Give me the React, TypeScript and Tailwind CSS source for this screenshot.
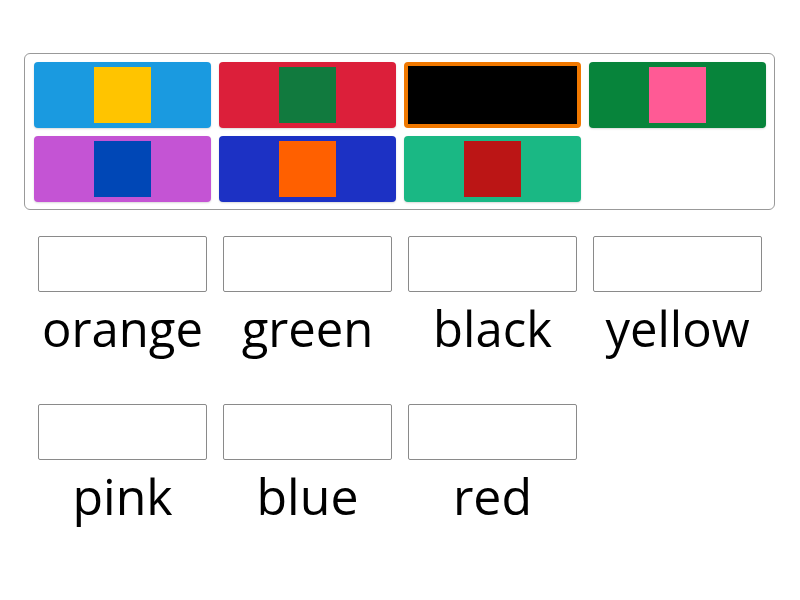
import React from "react";

type Tile = { bg: string; inner?: string; black?: boolean };

const tiles: Tile[] = [
  { bg: "bg-[#1a9ae0]", inner: "bg-[#ffc400]" },
  { bg: "bg-[#dc1f3a]", inner: "bg-[#117a3e]" },
  { bg: "bg-black", black: true },
  { bg: "bg-[#07843b]", inner: "bg-[#ff5a95]" },
  { bg: "bg-[#c454d4]", inner: "bg-[#0047b6]" },
  { bg: "bg-[#1c31c4]", inner: "bg-[#ff6000]" },
  { bg: "bg-[#1ab884]", inner: "bg-[#bb1515]" },
];

const words1 = ["orange", "green", "black", "yellow"];
const words2 = ["pink", "blue", "red"];

function Slot({ word, big }: { word: string; big?: boolean }) {
  return (
    <div className="flex flex-col items-center">
      <div className="h-[56px] w-[169px] rounded-[2px] border border-[#8a8a8a] bg-white" />
      <div
        className={`mt-[4px] leading-[65px] text-black whitespace-nowrap ${
          big ? "text-[50px]" : "text-[49px]"
        }`}
      >
        {word}
      </div>
    </div>
  );
}

export default function App() {
  return (
    <div
      className="w-[800px] h-[600px] bg-white overflow-hidden"
      style={{ fontFamily: '"Open Sans", "Noto Sans", sans-serif' }}
    >
      <div className="pt-[53px] pl-[24px]">
        <div className="w-[751px] rounded-[6px] border border-[#999999] pl-[9px] pr-[8px] pt-[8px] pb-[7px]">
          <div className="grid grid-cols-[repeat(4,177px)] gap-x-[8px] gap-y-[8px]">
            {tiles.map((t, i) =>
              t.black ? (
                <div
                  key={i}
                  className="h-[66px] rounded-[4px] border-[4px] border-[#f07800] bg-black"
                />
              ) : (
                <div
                  key={i}
                  className={`h-[66px] rounded-[4px] ${t.bg} flex items-center justify-center shadow-[0_1px_2px_rgba(0,0,0,0.15)]`}
                >
                  <div className={`h-[56px] w-[57px] ${t.inner}`} />
                </div>
              )
            )}
          </div>
        </div>
      </div>
      <div className="pl-[30px] pt-[26px]">
        <div className="grid grid-cols-[repeat(4,185px)]">
          {words1.map((w) => (
            <Slot key={w} word={w} />
          ))}
        </div>
        <div className="grid grid-cols-[repeat(4,185px)] mt-[43px]">
          {words2.map((w) => (
            <Slot key={w} word={w} big />
          ))}
        </div>
      </div>
    </div>
  );
}
